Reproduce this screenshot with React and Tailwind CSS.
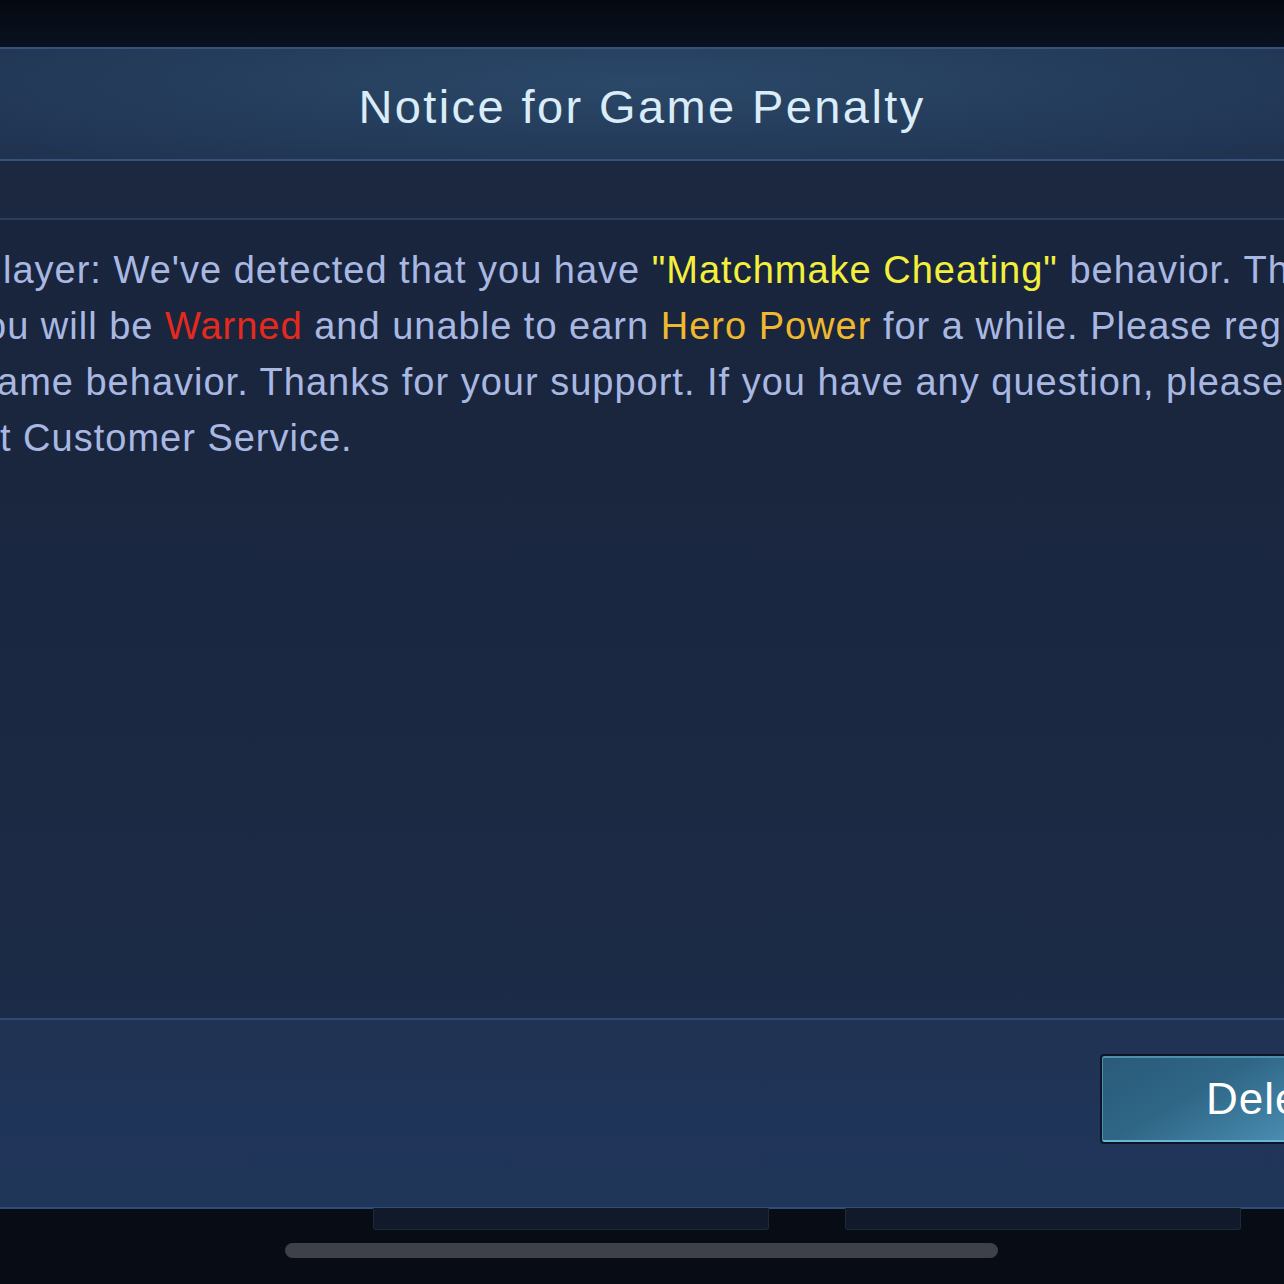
export default function App() {
  return (
    <div className="w-[1284px] h-[1284px] overflow-hidden bg-[#070c15] flex flex-col font-['Liberation_Sans']">
      <div className="h-[47px] shrink-0 bg-gradient-to-b from-[#050810] to-[#0a1220]" />

      {/* dialog */}
      <div className="flex flex-col shrink-0">
        <div className="h-[114px] border-y-2 border-[#34527a] bg-[radial-gradient(ellipse_at_50%_30%,#2b4868_0%,#253d5c_50%,#1f3250_100%)] flex items-center justify-center">
          <h1 className="text-[47px] tracking-[2.4px] text-[#d9ecf8] leading-none pt-1">Notice for Game Penalty</h1>
        </div>
        <div className="h-[59px] bg-[#1b283f] border-b-2 border-[#2a3e5e]" />
        <div className="h-[798px] bg-gradient-to-b from-[#19253c] via-[#1a2740] to-[#1c2b47] pt-[22px] overflow-hidden">
          <div className="text-[38px] tracking-[1px] leading-[56px] text-[#a9b8e2] whitespace-nowrap">
            <p className="ml-[3px]">
              layer: We've detected that you have <span className="text-[#f3ef3c]">"Matchmake Cheating"</span> behavior. This time
            </p>
            <p className="-ml-[15px]">
              ou will be <span className="text-[#e6291d]">Warned</span> and unable to earn <span className="text-[#f0b82e]">Hero Power</span> for a while. Please regulate your
            </p>
            <p className="-ml-[3px]">
              ame behavior. Thanks for your support. If you have any question, please contact
            </p>
            <p className="ml-[0px]">t Customer Service.</p>
          </div>
        </div>
        <div className="h-[191px] border-t-2 border-[#2d4a74] bg-gradient-to-b from-[#213352] via-[#1f3459] to-[#203658] border-b-2 border-b-[#2e4d78] flex justify-end pt-[34px]">
          <button className="h-[90px] w-[200px] -mr-[16px] shrink-0 rounded-[4px] border-2 border-[#0c1626] bg-[linear-gradient(150deg,#2a5a79_0%,#2f6686_45%,#4b90b5_100%)] shadow-[inset_0_1px_0_1px_#4f8fae,inset_0_-2px_0_0_#6bb6d6] flex items-center pl-[104px] text-[44px] text-white tracking-[1px] whitespace-nowrap">
            Delete
          </button>
        </div>
      </div>

      {/* behind dialog */}
      <div className="flex-1 flex flex-col">
        <div className="flex gap-[76px] -mt-[1px] ml-[373px]">
          <div className="w-[396px] h-[22px] rounded-b-[3px] bg-[#101a2a] border border-t-0 border-[#1d2a3c]" />
          <div className="w-[396px] h-[22px] rounded-b-[3px] bg-[#101a2a] border border-t-0 border-[#1d2a3c]" />
        </div>
        <div className="mt-[13px] ml-[285px] w-[713px] h-[15px] rounded-full bg-[#3e4149]" />
      </div>
    </div>
  );
}
